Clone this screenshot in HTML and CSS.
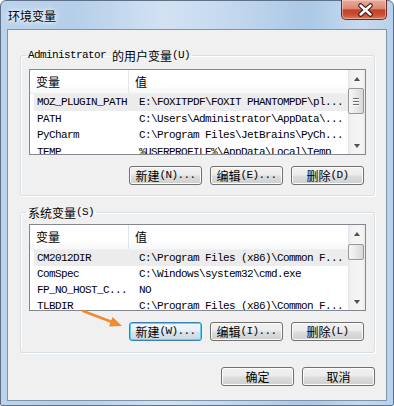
FILE: index.html
```html
<!DOCTYPE html>
<html lang="zh-CN">

<head>
    <meta charset="utf-8">
    <meta name="viewport" content="width=device-width, initial-scale=1.0">
    <title>环境变量</title>
    <link rel="stylesheet" href="styles.css">
</head>

<body>

    <div class="window">
        <div class="titlebar">
            <span class="title">环境变量</span>
            <div class="close">
                <svg width="46" height="19" viewBox="0 0 46 19">
                    <path d="M18.5 5.5 L28.5 14.5 M28.5 5.5 L18.5 14.5" stroke="#3a1a14" stroke-width="4.6" stroke-linecap="round" fill="none"/>
                    <path d="M18.5 5.5 L28.5 14.5 M28.5 5.5 L18.5 14.5" stroke="#fff" stroke-width="2.4" stroke-linecap="round" fill="none"/>
                </svg>
            </div>
        </div>

        <div class="client">
            <fieldset class="group first">
                <legend><span>Administrator </span><span class="cn">的用户变量</span><span>(U)</span></legend>
                <div class="list">
                    <div class="rows">
                        <div class="head"><span class="c1 cn">变量</span><span class="c2 cn">值</span></div>
                        <div class="row sel"><span class="c1">MOZ_PLUGIN_PATH</span><span class="c2">E:\FOXITPDF\FOXIT PHANTOMPDF\pl...</span></div>
                        <div class="row"><span class="c1">PATH</span><span class="c2">C:\Users\Administrator\AppData\...</span></div>
                        <div class="row"><span class="c1">PyCharm</span><span class="c2">C:\Program Files\JetBrains\PyCh...</span></div>
                        <div class="row"><span class="c1">TEMP</span><span class="c2">%USERPROFILE%\AppData\Local\Temp</span></div>
                    </div>
                    <div class="scroll">
                        <div class="sb-btn up"></div>
                        <div class="track"><div class="thumb"><i></i><i></i><i></i></div></div>
                        <div class="sb-btn down"></div>
                    </div>
                </div>
                <div class="buttons">
                    <button><span class="cn">新建</span><span>(N)...</span></button>
                    <button><span class="cn">编辑</span><span>(E)...</span></button>
                    <button><span class="cn">删除</span><span>(D)</span></button>
                </div>
            </fieldset>

            <fieldset class="group second">
                <legend><span class="cn">系统变量</span><span>(S)</span></legend>
                <div class="list">
                    <div class="rows">
                        <div class="head"><span class="c1 cn">变量</span><span class="c2 cn">值</span></div>
                        <div class="row sel"><span class="c1">CM2012DIR</span><span class="c2">C:\Program Files (x86)\Common F...</span></div>
                        <div class="row"><span class="c1">ComSpec</span><span class="c2">C:\Windows\system32\cmd.exe</span></div>
                        <div class="row"><span class="c1">FP_NO_HOST_C...</span><span class="c2">NO</span></div>
                        <div class="row"><span class="c1">TLBDIR</span><span class="c2">C:\Program Files (x86)\Common F...</span></div>
                    </div>
                    <div class="scroll">
                        <div class="sb-btn up"></div>
                        <div class="track"><div class="thumb small"></div></div>
                        <div class="sb-btn down"></div>
                    </div>
                </div>
                <div class="buttons">
                    <button class="focus"><span class="cn">新建</span><span>(W)...</span></button>
                    <button><span class="cn">编辑</span><span>(I)...</span></button>
                    <button><span class="cn">删除</span><span>(L)</span></button>
                </div>
            </fieldset>

            <div class="footer">
                <button><span class="cn">确定</span></button>
                <button><span class="cn">取消</span></button>
            </div>
        </div>

        <!-- orange pointer drawn over the dialog -->
        <svg class="pointer" width="50" height="26" viewBox="0 0 50 26">
            <line x1="5" y1="5" x2="34" y2="16" stroke="#f28a30" stroke-width="2.6" stroke-linecap="round"/>
            <polygon points="44,20 31,20.5 34.6,11" fill="#f28a30"/>
        </svg>
    </div>

</body>

</html>
```

FILE: styles.css
```css
body {
    margin: 0;
}

.window {
    position: relative;
    width: 394px;
    height: 406px;
    box-sizing: border-box;
    border: 1px solid #5d7189;
    border-radius: 6px 6px 2px 2px;
    padding: 0 6px 4px;
    display: flex;
    flex-direction: column;
    background: linear-gradient(to right, #bcd3ec 0%, #b5cee9 18%, #d2e2f3 42%, #c2d7ee 60%, #abc8e6 78%, #c6daef 92%, #b8d0ea 100%);
    font-family: "Liberation Mono", monospace;
    font-size: 11px;
    letter-spacing: -0.6px;
    color: #000;
}

.cn {
    font-family: "Noto Sans CJK SC", sans-serif;
    font-size: 12px;
    letter-spacing: 0;
}

.titlebar {
    height: 28px;
    display: flex;
    align-items: center;
    padding-left: 1px;
}

.title {
    font-family: "Noto Sans CJK SC", sans-serif;
    font-size: 12px;
    letter-spacing: 0;
    text-shadow: 0 0 4px #fff, 0 0 8px #fff;
}

.close {
    margin-left: auto;
    align-self: flex-start;
    margin-top: -1px;
    width: 46px;
    height: 20px;
    box-sizing: border-box;
    border: 1px solid #6b2a1f;
    border-top: none;
    border-radius: 0 0 5px 5px;
    background: linear-gradient(#e9ab9b 0%, #dc8874 45%, #c0432b 52%, #c84b31 75%, #e07a55 100%);
    box-shadow: inset 0 0 0 1px rgba(255, 220, 210, 0.5);
}

.close svg {
    display: block;
}

.client {
    flex: 1;
    background: #f0f0f0;
    border: 1px solid #8193a8;
    display: flex;
    flex-direction: column;
}

.group {
    margin: 0 11px 0 12px;
    padding: 0;
    border: 1px solid #d5dfe5;
    border-radius: 3px;
    box-shadow: inset 1px 1px 0 #fff, 1px 1px 0 #fff;
    min-inline-size: 0;
}

.group.first {
    margin-top: 18px;
}

.group.second {
    margin-top: 9px;
    padding-bottom: 1px;
}

legend {
    height: 14px;
    margin-left: 5px;
    padding: 0 2px;
    display: flex;
    align-items: center;
    white-space: pre;
}

.list {
    margin: 7px 8px 0;
    height: 86px;
    box-sizing: border-box;
    border: 1px solid #828790;
    background: #fff;
    display: flex;
    overflow: hidden;
}

.second .list {
    margin-top: 5px;
    height: 87px;
}

.rows {
    flex: 1;
    overflow: hidden;
}

.head {
    height: 24px;
    display: flex;
    line-height: 23px;
    background: linear-gradient(#fff 60%, #f6f7f9);
    border-bottom: 1px solid #eef0f2;
    box-sizing: border-box;
}

.second .head {
    height: 25px;
    line-height: 24px;
}

.head .c1 {
    width: 99px;
    padding-left: 6px;
    border-right: 1px solid #e2e5e9;
    box-sizing: border-box;
    flex: none;
}

.head .c2 {
    padding-left: 6px;
}

.row {
    height: 16.5px;
    line-height: 16.5px;
    margin-left: 4px;
    display: flex;
    white-space: pre;
}

.second .row {
    height: 16px;
    line-height: 16px;
}

.row.sel {
    background: #ececec;
}

.row .c1 {
    width: 95px;
    padding-left: 3px;
    flex: none;
    overflow: hidden;
}

.row .c2 {
    padding-left: 7px;
}

.scroll {
    width: 17px;
    flex: none;
    display: flex;
    flex-direction: column;
    background: linear-gradient(to right, #e6e6e6, #f2f2f2 20%, #f5f5f5 80%, #ebebeb);
}

.sb-btn {
    height: 17px;
    flex: none;
    display: flex;
    align-items: center;
    justify-content: center;
}

.sb-btn::before {
    content: "";
    border-left: 3.5px solid transparent;
    border-right: 3.5px solid transparent;
}

.up::before {
    border-bottom: 4px solid #505050;
}

.down::before {
    border-top: 4px solid #505050;
}

.track {
    flex: 1;
}

.thumb {
    margin: 1px 1px 0 0;
    height: 26px;
    box-sizing: border-box;
    border: 1px solid #979797;
    border-radius: 2px;
    background: linear-gradient(to right, #f6f6f6, #e8e8e8 50%, #d8d8d8);
    display: flex;
    flex-direction: column;
    align-items: center;
    justify-content: center;
    gap: 2px;
}

.thumb i {
    width: 6px;
    height: 1px;
    background: #6e6e6e;
    box-shadow: 0 1px 0 #fff;
}

.thumb.small {
    margin-top: 2px;
    height: 16px;
}

.buttons {
    display: flex;
    justify-content: flex-end;
    gap: 8px;
    margin: 11px 10px 10px 8px;
}

button {
    width: 73px;
    height: 19px;
    box-sizing: border-box;
    padding: 0;
    border: 1px solid #707070;
    border-radius: 3px;
    background: linear-gradient(#f2f2f2 0%, #ebebeb 48%, #dddddd 52%, #cfcfcf 100%);
    box-shadow: inset 0 0 0 1px #fbfbfb;
    display: flex;
    align-items: center;
    justify-content: center;
    font-family: "Liberation Mono", monospace;
    font-size: 11px;
    letter-spacing: -0.6px;
    line-height: 1;
    color: #000;
    white-space: pre;
}

button.focus {
    border-color: #3c7fb1;
    box-shadow: inset 0 0 0 1px #5fd2fb;
    background: linear-gradient(#eef6fb 0%, #e6f0f6 48%, #d6e3ec 52%, #c9d9e4 100%);
}

.footer {
    display: flex;
    justify-content: flex-end;
    gap: 8px;
    margin: 14px 11px 14px 0;
}

.pointer {
    position: absolute;
    left: 77px;
    top: 305px;
}
```
